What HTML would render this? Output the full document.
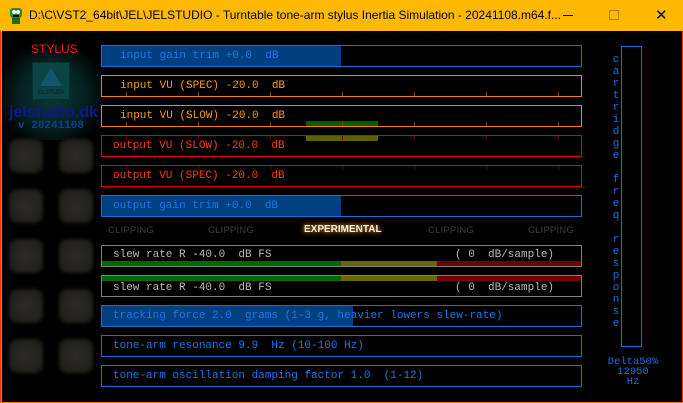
<!DOCTYPE html>
<html><head><meta charset="utf-8"><style>
*{margin:0;padding:0;box-sizing:border-box}
body{width:683px;height:403px;background:#000;position:relative;overflow:hidden;font-family:"Liberation Mono",monospace;font-size:11px}
.tb{position:absolute;left:0;top:0;width:683px;height:31px;background:#FFB900;font-family:"Liberation Sans",sans-serif;font-size:12px;color:#000}
.frame{position:absolute;left:0;top:31px;width:683px;height:372px;border:1px solid #ff3000;border-top:none}
.b{position:absolute;left:101px;width:481px;height:22px;border:1px solid;overflow:hidden}
.t{position:absolute;top:4px;white-space:pre;line-height:12px}
.fill{position:absolute;left:0;top:0;height:100%;background:#004080}
.tick{position:absolute;width:1px;height:4px}
.k{position:absolute;width:34px;height:34px;border-radius:8px;background:radial-gradient(circle,#2c2b27 0%,#23221d 60%,#17160f 100%);filter:blur(1.5px)}
.cl{position:absolute;top:225px;font-family:"Liberation Sans",sans-serif;font-size:9.5px;color:#3c3c3c;letter-spacing:0.2px}
.bar{position:absolute;left:0;width:479px;height:5px}
.lt{position:absolute;left:612px;width:8px;text-align:center;color:#1870e0;line-height:12px}
</style></head><body>
<div class="tb">
<svg style="position:absolute;left:8px;top:7px" width="16" height="18"><rect x="2" y="1" width="12" height="10" rx="3" fill="#2a8a30"/><circle cx="6" cy="5" r="2" fill="#fff"/><circle cx="10" cy="5" r="2" fill="#fff"/><rect x="5" y="8" width="6" height="2" fill="#000"/><rect x="4" y="11" width="8" height="6" fill="#1a6a20"/></svg>
<div style="position:absolute;left:29px;top:8px">D:\C\VST2_64bit\JEL\JELSTUDIO - Turntable tone-arm stylus Inertia Simulation - 20241108.m64.f...</div>
<div style="position:absolute;left:563px;top:15px;width:10px;height:1px;background:#000"></div>
<div style="position:absolute;left:609px;top:10px;width:10px;height:10px;border:1px solid #b08000"></div>
<div style="position:absolute;left:655px;top:6px;font-size:15px">✕</div>
</div>
<div class="frame"></div>
<div style="position:absolute;left:1px;top:31px;width:1px;height:371px;background:#ff8000"></div>
<div style="position:absolute;left:0;top:402px;width:683px;height:1px;background:#ff8000"></div>
<div style="position:absolute;left:2px;top:40px;width:100px;height:100px;background:radial-gradient(circle at 50% 55%,#0a3a3a 0%,#062020 45%,#000 75%)"></div>
<div style="position:absolute;left:31px;top:42px;color:#ff1010;font-family:'Liberation Sans',sans-serif;font-size:12px">STYLUS</div>
<div style="position:absolute;left:32px;top:62px;width:38px;height:38px;background:#0c4444;border:1px solid #073030"></div>
<svg style="position:absolute;left:38px;top:66px" width="26" height="30"><polygon points="13,2 24,20 2,20" fill="#16566a"/><text x="13" y="28" font-size="6" text-anchor="middle" fill="#062a2a" font-family="Liberation Sans" font-weight="bold">JELSTUDIO</text></svg>
<div style="position:absolute;left:9px;top:104px;color:#0a1a88;font-family:'Liberation Sans',sans-serif;font-size:16px;font-weight:bold">jelstudio.dk</div>
<div style="position:absolute;left:18px;top:120px;color:#143c90;font-size:11px;font-weight:bold">v 20241108</div>
<div class="k" style="left:9px;top:139px"></div><div class="k" style="left:59px;top:139px"></div>
<div class="k" style="left:9px;top:189px"></div><div class="k" style="left:59px;top:189px"></div>
<div class="k" style="left:9px;top:239px"></div><div class="k" style="left:59px;top:239px"></div>
<div class="k" style="left:9px;top:289px"></div><div class="k" style="left:59px;top:289px"></div>
<div class="k" style="left:9px;top:339px"></div><div class="k" style="left:59px;top:339px"></div>

<div class="b" style="top:45px;border-color:#1070e0"><div class="fill" style="width:239px"></div><div class="t" style="left:18px;color:#1878e8">input gain trim +0.0  dB</div></div>
<div class="b" style="top:75px;border-color:#ff8000"><div class="t" style="left:18px;color:#ff9a00">input VU (SPEC) -20.0  dB</div>
<i class="tick" style="left:24px;bottom:0;background:#804000"></i><i class="tick" style="left:96px;bottom:0;background:#804000"></i><i class="tick" style="left:168px;bottom:0;background:#804000"></i><i class="tick" style="left:240px;bottom:0;background:#804000"></i><i class="tick" style="left:312px;bottom:0;background:#804000"></i><i class="tick" style="left:384px;bottom:0;background:#804000"></i><i class="tick" style="left:456px;bottom:0;background:#804000"></i></div>
<div class="b" style="top:105px;border-color:#ff8000"><div class="t" style="left:18px;color:#ff9a00">input VU (SLOW) -20.0  dB</div>
<div style="position:absolute;left:204px;top:15px;width:72px;height:5px;background:#006000"></div>
<i class="tick" style="left:24px;bottom:0;background:#804000"></i><i class="tick" style="left:96px;bottom:0;background:#804000"></i><i class="tick" style="left:168px;bottom:0;background:#804000"></i><i class="tick" style="left:240px;bottom:0;background:#804000"></i><i class="tick" style="left:312px;bottom:0;background:#804000"></i><i class="tick" style="left:384px;bottom:0;background:#804000"></i><i class="tick" style="left:456px;bottom:0;background:#804000"></i></div>
<div class="b" style="top:135px;border-color:#e80000"><div class="t" style="left:11px;color:#ff3a10">output VU (SLOW) -20.0  dB</div>
<div style="position:absolute;left:204px;top:0;width:72px;height:5px;background:#606000"></div>
<i class="tick" style="left:24px;top:0;background:#600000"></i><i class="tick" style="left:96px;top:0;background:#600000"></i><i class="tick" style="left:168px;top:0;background:#600000"></i><i class="tick" style="left:240px;top:0;background:#600000"></i><i class="tick" style="left:312px;top:0;background:#600000"></i><i class="tick" style="left:384px;top:0;background:#600000"></i><i class="tick" style="left:456px;top:0;background:#600000"></i></div>
<div class="b" style="top:165px;border-color:#e80000"><div class="t" style="left:11px;color:#ff3a10">output VU (SPEC) -20.0  dB</div>
<i class="tick" style="left:24px;top:0;background:#600000"></i><i class="tick" style="left:96px;top:0;background:#600000"></i><i class="tick" style="left:168px;top:0;background:#600000"></i><i class="tick" style="left:240px;top:0;background:#600000"></i><i class="tick" style="left:312px;top:0;background:#600000"></i><i class="tick" style="left:384px;top:0;background:#600000"></i><i class="tick" style="left:456px;top:0;background:#600000"></i></div>
<div class="b" style="top:195px;border-color:#1070e0"><div class="fill" style="width:239px"></div><div class="t" style="left:11px;color:#1878e8">output gain trim +0.0  dB</div></div>

<div class="cl" style="left:108px">CLIPPING</div>
<div class="cl" style="left:208px">CLIPPING</div>
<div style="position:absolute;left:304px;top:224px;font-family:'Liberation Sans',sans-serif;font-size:10px;font-weight:bold;color:#fff0d8;text-shadow:0 0 4px #c08030,0 0 7px #a06020">EXPERIMENTAL</div>
<div class="cl" style="left:428px">CLIPPING</div>
<div class="cl" style="left:528px">CLIPPING</div>

<div class="b" style="top:245px;border-color:#808080"><div class="t" style="left:11px;top:3px;color:#b8b8b8">slew rate R -40.0  dB FS</div><div class="t" style="left:353px;top:3px;color:#b8b8b8">( 0  dB/sample)</div>
<div class="bar" style="bottom:0;background:linear-gradient(90deg,#006800 0 239px,#686800 239px 335px,#700000 335px)"></div></div>
<div class="b" style="top:275px;border-color:#808080"><div class="bar" style="top:0;background:linear-gradient(90deg,#006800 0 239px,#686800 239px 335px,#700000 335px)"></div><div class="t" style="left:11px;top:6px;color:#b8b8b8">slew rate R -40.0  dB FS</div><div class="t" style="left:353px;top:6px;color:#b8b8b8">( 0  dB/sample)</div></div>

<div class="b" style="top:305px;border-color:#1070e0"><div class="fill" style="width:251px"></div><div class="t" style="left:11px;color:#1878e8">tracking force 2.0  grams (1-3 g, heavier lowers slew-rate)</div></div>
<div class="b" style="top:335px;border-color:#1070e0"><div class="t" style="left:11px;color:#1878e8">tone-arm resonance 9.9  Hz (10-100 Hz)</div></div>
<div class="b" style="top:365px;border-color:#1070e0"><div class="t" style="left:11px;color:#1878e8">tone-arm oscillation damping factor 1.0  (1-12)</div></div>

<div style="position:absolute;left:621px;top:46px;width:21px;height:301px;border:1px solid #1070e0"></div>
<div class="lt" style="top:54px">c<br>a<br>r<br>t<br>r<br>i<br>d<br>g<br>e<br><br>f<br>r<br>e<br>q<br><br>r<br>e<br>s<br>p<br>o<br>n<br>s<br>e</div>
<div style="position:absolute;left:600px;top:357px;width:66px;text-align:center;color:#1870e0;line-height:10px;font-size:10.5px">Delta50%<br>12950<br>Hz</div>
</body></html>
